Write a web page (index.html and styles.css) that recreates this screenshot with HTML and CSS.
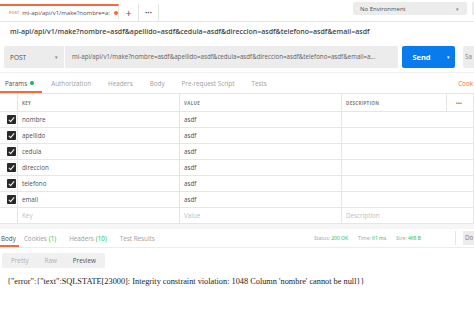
FILE: index.html
```html
<!DOCTYPE html>
<html lang="en">
<head>
    <meta charset="UTF-8">
    <meta name="viewport" content="width=device-width, initial-scale=1.0">
    <title>mi-api request</title>
    <link rel="stylesheet" href="styles.css">
</head>
<body>

    <div class="topbar">
        <div class="req-tab">
            <span class="tab-method">POST</span>
            <span class="tab-name">mi-api/api/v1/make?nombre=a:</span>
            <span class="tab-dot"></span>
        </div>
        <div class="tab-btn">+</div>
        <div class="tab-btn dots">&middot;&middot;&middot;</div>
        <div class="spacer"></div>
        <div class="env-select">
            <span>No Environment</span>
            <span class="caret">&#9662;</span>
        </div>
        <div class="env-eye"></div>
    </div>

    <div class="req-title">mi-api/api/v1/make?nombre=asdf&amp;apellido=asdf&amp;cedula=asdf&amp;direccion=asdf&amp;telefono=asdf&amp;email=asdf</div>

    <div class="req-bar">
        <div class="method">
            <span>POST</span>
            <span class="caret">&#9662;</span>
        </div>
        <div class="url">mi-api/api/v1/make?nombre=asdf&amp;apellido=asdf&amp;cedula=asdf&amp;direccion=asdf&amp;telefono=asdf&amp;email=a...</div>
        <div class="send">
            <span class="send-label">Send</span>
            <span class="send-caret">&#9662;</span>
        </div>
        <div class="save">Sa</div>
    </div>

    <div class="req-tabs">
        <div class="tab active">Params <span class="green-dot"></span></div>
        <div class="tab">Authorization</div>
        <div class="tab">Headers</div>
        <div class="tab">Body</div>
        <div class="tab">Pre-request Script</div>
        <div class="tab">Tests</div>
        <div class="spacer"></div>
        <div class="cookies">Cook</div>
    </div>

    <table class="params">
        <tr class="head">
            <td class="chk"></td>
            <td class="key">KEY</td>
            <td class="val">VALUE</td>
            <td class="desc">DESCRIPTION</td>
            <td class="more">&bull;&bull;&bull;</td>
        </tr>
        <tr><td class="chk"><span class="box"></span></td><td class="key">nombre</td><td class="val">asdf</td><td class="desc" colspan="2"></td></tr>
        <tr><td class="chk"><span class="box"></span></td><td class="key">apellido</td><td class="val">asdf</td><td class="desc" colspan="2"></td></tr>
        <tr><td class="chk"><span class="box"></span></td><td class="key">cedula</td><td class="val">asdf</td><td class="desc" colspan="2"></td></tr>
        <tr><td class="chk"><span class="box"></span></td><td class="key">direccion</td><td class="val">asdf</td><td class="desc" colspan="2"></td></tr>
        <tr><td class="chk"><span class="box"></span></td><td class="key">telefono</td><td class="val">asdf</td><td class="desc" colspan="2"></td></tr>
        <tr><td class="chk"><span class="box"></span></td><td class="key">email</td><td class="val">asdf</td><td class="desc" colspan="2"></td></tr>
        <tr class="empty"><td class="chk"></td><td class="key">Key</td><td class="val">Value</td><td class="desc" colspan="2">Description</td></tr>
    </table>

    <div class="band"></div>

    <div class="res-tabs">
        <div class="tab active">Body</div>
        <div class="tab">Cookies <span class="count">(1)</span></div>
        <div class="tab">Headers <span class="count">(10)</span></div>
        <div class="tab">Test Results</div>
        <div class="spacer"></div>
        <div class="stat">Status: <span class="ok">200 OK</span></div>
        <div class="stat">Time: <span class="ok">61 ms</span></div>
        <div class="stat last">Size: <span class="ok">468 B</span></div>
        <div class="download">Do</div>
    </div>

    <div class="view-bar">
        <div class="views">
            <span>Pretty</span>
            <span>Raw</span>
            <span class="on">Preview</span>
        </div>
    </div>

    <div class="res-body">{"error":{"text":SQLSTATE[23000]: Integrity constraint violation: 1048 Column 'nombre' cannot be null}}</div>

</body>
</html>
```

FILE: styles.css
```css
body {
    margin: 0;
    width: 474px;
    height: 311px;
    overflow: hidden;
    background: #fff;
    font-family: 'Open Sans', sans-serif;
    color: #505050;
}

.spacer {
    flex: 1;
}

/* top tab strip */
.topbar {
    display: flex;
    align-items: flex-start;
    height: 21px;
    border-bottom: 1px solid #e6e6e6;
}

.req-tab {
    display: flex;
    align-items: center;
    width: 119px;
    height: 15px;
    margin-top: 4px;
    border-top: 2px solid #f26b3a;
    border-right: 1px solid #e6e6e6;
    padding-left: 9px;
    box-sizing: border-box;
    font-size: 6px;
}

.tab-method {
    color: #f5a623;
    font-size: 4px;
    font-weight: 700;
    margin-right: 3px;
}

.tab-name {
    color: #505050;
}

.tab-dot {
    width: 4px;
    height: 4px;
    border-radius: 50%;
    background: #f26b3a;
    margin-left: 4px;
}

.tab-btn {
    width: 19px;
    height: 17px;
    margin-top: 4px;
    border-right: 1px solid #e6e6e6;
    display: flex;
    align-items: center;
    justify-content: center;
    font-size: 10px;
    color: #505050;
}

.tab-btn.dots {
    font-size: 8px;
    font-weight: 700;
}

.env-select {
    display: flex;
    justify-content: space-between;
    align-items: center;
    width: 114px;
    height: 13px;
    margin-top: 2px;
    padding: 0 8px 0 7px;
    box-sizing: border-box;
    background: #ececec;
    border-radius: 2px;
    font-size: 6px;
}

.caret {
    font-size: 5px;
    color: #808080;
}

.env-eye {
    width: 2px;
    height: 13px;
    margin: 2px 0 0 5px;
    background: #ececec;
}

/* request title */
.req-title {
    height: 20px;
    line-height: 20px;
    padding-left: 10px;
    font-size: 7px;
    font-weight: 600;
    color: #454545;
    white-space: nowrap;
}

/* request bar */
.req-bar {
    display: flex;
    height: 22px;
    margin-top: 4px;
    padding-left: 4px;
    font-size: 6.2px;
    overflow: hidden;
}

.req-bar > div {
    flex-shrink: 0;
}

.method {
    display: flex;
    justify-content: space-between;
    align-items: center;
    width: 60px;
    padding: 0 6px 0 6px;
    box-sizing: border-box;
    background: #ececec;
    border-radius: 2px 0 0 2px;
    font-size: 6.5px;
}

.url {
    width: 333px;
    margin-left: 1px;
    padding-left: 7px;
    box-sizing: border-box;
    background: #ececec;
    border-radius: 0 2px 2px 0;
    line-height: 22px;
    color: #606060;
    white-space: nowrap;
    overflow: hidden;
}

.send {
    display: flex;
    align-items: center;
    width: 53px;
    margin-left: 4px;
    background: #097bed;
    border-radius: 2px;
    color: #fff;
}

.send-label {
    flex: 1;
    text-align: center;
    font-size: 7.5px;
    font-weight: 700;
}

.send-caret {
    width: 14px;
    font-size: 5px;
    text-align: center;
}

.save {
    width: 12px;
    margin-left: 8px;
    padding-left: 2px;
    background: #ececec;
    border-radius: 2px 0 0 2px;
    line-height: 22px;
    color: #808080;
}

/* request tabs */
.req-tabs {
    display: flex;
    align-items: stretch;
    height: 20px;
    margin-top: 4px;
    border-top: 1px solid #f0f0f0;
    border-bottom: 1px solid #e6e6e6;
    font-size: 6.3px;
}

.req-tabs .tab,
.res-tabs .tab {
    display: flex;
    align-items: center;
    color: #a0a0a0;
    padding: 0 8px 0 5px;
    margin-right: 4px;
}

.req-tabs .tab.active,
.res-tabs .tab.active {
    color: #505050;
    box-shadow: inset 0 -2px 0 #f26b3a;
}

.green-dot {
    width: 4px;
    height: 4px;
    border-radius: 50%;
    background: #0cbb52;
    margin-left: 3px;
}

.cookies {
    display: flex;
    align-items: center;
    color: #f26b3a;
    padding-right: 1px;
    white-space: nowrap;
}

/* params table */
.params {
    width: 474px;
    border-collapse: collapse;
    table-layout: fixed;
    font-size: 6.3px;
}

.params td {
    border: 1px solid #e6e6e6;
    height: 15px;
    padding: 0 0 0 4px;
    white-space: nowrap;
    overflow: hidden;
}

.params tr.head td {
    height: 17px;
    border-top: none;
    font-size: 4.5px;
    font-weight: 700;
    color: #808080;
    letter-spacing: 0.3px;
}

.params td.chk {
    width: 17px;
    padding: 0;
    border-left: none;
}

.params td.key {
    width: 157px;
}

.params td.val {
    width: 157px;
}

.params td.more {
    width: 24px;
    padding: 0 2px 0 0;
    text-align: center;
    font-size: 4px;
    letter-spacing: 0;
    border-right: 1px solid #e6e6e6;
}

.params tr.empty td {
    color: #c0c0c0;
}

.box {
    display: block;
    position: relative;
    width: 9px;
    height: 9px;
    margin-left: 7px;
    background: #282828;
    border-radius: 1px;
}

.box::after {
    content: "";
    position: absolute;
    left: 3px;
    top: 1px;
    width: 2px;
    height: 5px;
    border: solid #fff;
    border-width: 0 1.5px 1.5px 0;
    transform: rotate(40deg);
}

.band {
    height: 5px;
    background: #f6f6f6;
}

/* response tabs */
.res-tabs {
    display: flex;
    align-items: stretch;
    height: 18px;
    border-bottom: 1px solid #ececec;
    font-size: 6.3px;
}

.res-tabs .tab {
    padding: 0 5px 0 3px;
    margin-right: 5px;
}

.res-tabs .tab.active {
    padding: 0 3px 0 1px;
    margin-right: 2px;
}

.count {
    color: #0cbb52;
    margin-left: 2px;
}

.stat {
    display: flex;
    align-items: center;
    color: #a0a0a0;
    margin-right: 10px;
    font-size: 5px;
    white-space: pre;
}

.stat.last {
    margin-right: 34px;
}

.ok {
    color: #0cbb52;
}

.download {
    width: 19px;
    margin: 2px 0 2px 0;
    padding-left: 9px;
    box-sizing: border-box;
    border-left: 1px solid #e6e6e6;
    background: linear-gradient(90deg, #fff 0 7px, #ececec 7px);
    color: #808080;
    overflow: hidden;
    white-space: nowrap;
    line-height: 14px;
}

.view-bar {
    padding: 5px 0 0 2px;
}

.views {
    display: flex;
    gap: 16px;
    width: 103px;
    height: 15px;
    align-items: center;
    padding-left: 9px;
    box-sizing: border-box;
    background: #f0f0f0;
    border-radius: 2px;
    font-size: 6.3px;
    color: #b0b0b0;
}

.views .on {
    color: #505050;
}

.res-body {
    margin-top: 9px;
    padding-left: 7px;
    font-family: 'Liberation Serif', serif;
    font-size: 8.3px;
    color: #222;
    white-space: nowrap;
}
```
